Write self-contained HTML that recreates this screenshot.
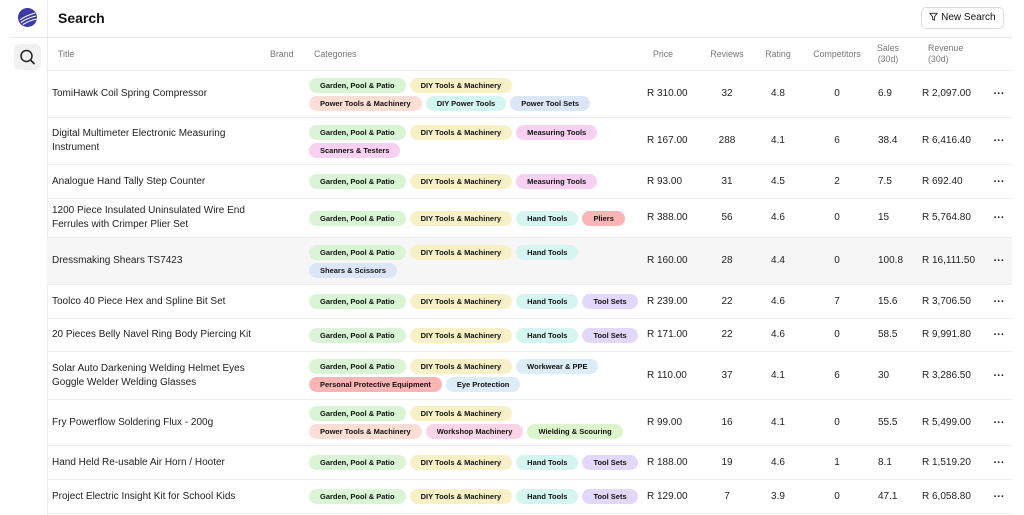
<!DOCTYPE html>
<html><head><meta charset="utf-8"><style>
*{box-sizing:border-box;margin:0;padding:0}
body{width:1024px;height:515px;overflow:hidden;background:#fff;font-family:"Liberation Sans",Arial,sans-serif;color:#1f1f1f;position:relative}
.vl{position:absolute;left:47px;top:0;width:1px;height:515px;background:#ececec}
.hl{position:absolute;left:10px;top:37px;width:1002px;height:1px;background:#e8e8e8}
.logo{position:absolute;left:18px;top:8px;width:19px;height:19px;border-radius:50%;background:#3b3aa8;overflow:hidden}
.sbtn{position:absolute;left:14px;top:44px;width:27px;height:26px;border-radius:6px;background:#f1f1f1}
h1{position:absolute;left:58px;top:10px;font-size:14px;font-weight:bold;color:#111}
.ns{position:absolute;left:921px;top:7px;width:83px;height:22px;border:1px solid #dcdcdc;border-radius:5px;font-size:10px;line-height:20px;text-align:center;color:#111}
.row{position:absolute;left:47px;width:965px;border-bottom:1px solid #ececec}
.row.gray{background:#f6f6f6}
.c{position:absolute;top:0;bottom:0;display:flex;align-items:center;font-size:10px;line-height:14px}
.hd .c{font-size:8.8px;color:#777;line-height:11px}
.t{left:5px;width:210px}
.br{left:223px}
.cat{left:262px;width:360px;flex-direction:column;align-items:flex-start;justify-content:center;gap:3px}
.cat div{display:flex;gap:4px}
.pr{left:600px}
.rv{left:662px;width:36px;justify-content:center}
.rt{left:713px;width:36px;justify-content:center}
.cp{left:763px;width:54px;justify-content:center}
.sl{left:831px}
.re{left:875px}
.dt{left:942px;width:20px;justify-content:center;font-weight:bold;font-size:11px}
.p{display:inline-block;height:15px;line-height:15px;padding:0 11px;border-radius:8px;font-size:7.5px;font-weight:bold;color:#111;white-space:nowrap}
.g{background:#d9f5d6}.y{background:#f8f1c8}.o{background:#fbded5}.cy{background:#d5f5f0}.b{background:#dbe6f8}.pi{background:#f7d0f2}.r{background:#fbb5b5}.v{background:#e2d8fb}.lb{background:#dcedf8}.wk{background:#fad5ea}.lg{background:#dcf5cc}
</style></head><body>
<div class="vl"></div><div class="hl"></div>
<div class="logo"><svg width="19" height="19" viewBox="0 0 19 19"><g fill="none" stroke="#fff" stroke-width="1.1"><path d="M2 12 Q7 8 17 5"/><path d="M3 14.5 Q9 10 18 8"/><path d="M5 16.5 Q11 12.5 19 11"/></g></svg></div>
<div class="sbtn"><svg width="27" height="26" viewBox="0 0 27 26"><circle cx="12.5" cy="12" r="5.5" fill="none" stroke="#222" stroke-width="1.5"/><path d="M16.5 16 L20 19.5" stroke="#222" stroke-width="1.6" stroke-linecap="round"/></svg></div>
<h1>Search</h1>
<div class="ns"><svg width="9" height="9" viewBox="0 0 10 10" style="vertical-align:-1px"><path d="M1 1.5 H9 L6 5.5 V9 L4 8 V5.5 Z" fill="none" stroke="#222" stroke-width="1"/></svg> New Search</div>

<div class="row hd" style="top:38px;height:33px">
<div class="c" style="left:11px">Title</div><div class="c br">Brand</div><div class="c" style="left:267px">Categories</div><div class="c" style="left:606px">Price</div><div class="c rv" style="left:660px;width:40px">Reviews</div><div class="c rt">Rating</div><div class="c cp" style="left:760px;width:60px">Competitors</div><div class="c" style="left:830px;width:34px;text-align:center">Sales<br>(30d)</div><div class="c" style="left:881px">Revenue<br>(30d)</div>
</div>

<div class="row" style="top:71px;height:47px"><div class="c t">TomiHawk Coil Spring Compressor</div><div class="c cat"><div><span class="p g">Garden, Pool &amp; Patio</span><span class="p y">DIY Tools &amp; Machinery</span></div><div><span class="p o">Power Tools &amp; Machinery</span><span class="p cy">DIY Power Tools</span><span class="p b">Power Tool Sets</span></div></div><div class="c pr">R 310.00</div><div class="c rv">32</div><div class="c rt">4.8</div><div class="c cp">0</div><div class="c sl">6.9</div><div class="c re">R 2,097.00</div><div class="c dt">···</div></div>

<div class="row" style="top:118px;height:47px"><div class="c t">Digital Multimeter Electronic Measuring Instrument</div><div class="c cat"><div><span class="p g">Garden, Pool &amp; Patio</span><span class="p y">DIY Tools &amp; Machinery</span><span class="p pi">Measuring Tools</span></div><div><span class="p pi">Scanners &amp; Testers</span></div></div><div class="c pr">R 167.00</div><div class="c rv">288</div><div class="c rt">4.1</div><div class="c cp">6</div><div class="c sl">38.4</div><div class="c re">R 6,416.40</div><div class="c dt">···</div></div>

<div class="row" style="top:165px;height:34px"><div class="c t">Analogue Hand Tally Step Counter</div><div class="c cat"><div><span class="p g">Garden, Pool &amp; Patio</span><span class="p y">DIY Tools &amp; Machinery</span><span class="p pi">Measuring Tools</span></div></div><div class="c pr">R 93.00</div><div class="c rv">31</div><div class="c rt">4.5</div><div class="c cp">2</div><div class="c sl">7.5</div><div class="c re">R 692.40</div><div class="c dt">···</div></div>

<div class="row" style="top:199px;height:39px"><div class="c t">1200 Piece Insulated Uninsulated Wire End Ferrules with Crimper Plier Set</div><div class="c cat"><div><span class="p g">Garden, Pool &amp; Patio</span><span class="p y">DIY Tools &amp; Machinery</span><span class="p cy">Hand Tools</span><span class="p r">Pliers</span></div></div><div class="c pr">R 388.00</div><div class="c rv">56</div><div class="c rt">4.6</div><div class="c cp">0</div><div class="c sl">15</div><div class="c re">R 5,764.80</div><div class="c dt">···</div></div>

<div class="row gray" style="top:238px;height:47px"><div class="c t">Dressmaking Shears TS7423</div><div class="c cat"><div><span class="p g">Garden, Pool &amp; Patio</span><span class="p y">DIY Tools &amp; Machinery</span><span class="p cy">Hand Tools</span></div><div><span class="p b">Shears &amp; Scissors</span></div></div><div class="c pr">R 160.00</div><div class="c rv">28</div><div class="c rt">4.4</div><div class="c cp">0</div><div class="c sl">100.8</div><div class="c re">R 16,111.50</div><div class="c dt">···</div></div>

<div class="row" style="top:285px;height:34px"><div class="c t">Toolco 40 Piece Hex and Spline Bit Set</div><div class="c cat"><div><span class="p g">Garden, Pool &amp; Patio</span><span class="p y">DIY Tools &amp; Machinery</span><span class="p cy">Hand Tools</span><span class="p v">Tool Sets</span></div></div><div class="c pr">R 239.00</div><div class="c rv">22</div><div class="c rt">4.6</div><div class="c cp">7</div><div class="c sl">15.6</div><div class="c re">R 3,706.50</div><div class="c dt">···</div></div>

<div class="row" style="top:319px;height:33px"><div class="c t">20 Pieces Belly Navel Ring Body Piercing Kit</div><div class="c cat"><div><span class="p g">Garden, Pool &amp; Patio</span><span class="p y">DIY Tools &amp; Machinery</span><span class="p cy">Hand Tools</span><span class="p v">Tool Sets</span></div></div><div class="c pr">R 171.00</div><div class="c rv">22</div><div class="c rt">4.6</div><div class="c cp">0</div><div class="c sl">58.5</div><div class="c re">R 9,991.80</div><div class="c dt">···</div></div>

<div class="row" style="top:352px;height:48px"><div class="c t">Solar Auto Darkening Welding Helmet Eyes Goggle Welder Welding Glasses</div><div class="c cat"><div><span class="p g">Garden, Pool &amp; Patio</span><span class="p y">DIY Tools &amp; Machinery</span><span class="p lb">Workwear &amp; PPE</span></div><div><span class="p r">Personal Protective Equipment</span><span class="p lb">Eye Protection</span></div></div><div class="c pr">R 110.00</div><div class="c rv">37</div><div class="c rt">4.1</div><div class="c cp">6</div><div class="c sl">30</div><div class="c re">R 3,286.50</div><div class="c dt">···</div></div>

<div class="row" style="top:400px;height:46px"><div class="c t">Fry Powerflow Soldering Flux - 200g</div><div class="c cat"><div><span class="p g">Garden, Pool &amp; Patio</span><span class="p y">DIY Tools &amp; Machinery</span></div><div><span class="p o">Power Tools &amp; Machinery</span><span class="p wk">Workshop Machinery</span><span class="p lg">Wielding &amp; Scouring</span></div></div><div class="c pr">R 99.00</div><div class="c rv">16</div><div class="c rt">4.1</div><div class="c cp">0</div><div class="c sl">55.5</div><div class="c re">R 5,499.00</div><div class="c dt">···</div></div>

<div class="row" style="top:446px;height:34px"><div class="c t">Hand Held Re-usable Air Horn / Hooter</div><div class="c cat"><div><span class="p g">Garden, Pool &amp; Patio</span><span class="p y">DIY Tools &amp; Machinery</span><span class="p cy">Hand Tools</span><span class="p v">Tool Sets</span></div></div><div class="c pr">R 188.00</div><div class="c rv">19</div><div class="c rt">4.6</div><div class="c cp">1</div><div class="c sl">8.1</div><div class="c re">R 1,519.20</div><div class="c dt">···</div></div>

<div class="row" style="top:480px;height:34px"><div class="c t">Project Electric Insight Kit for School Kids</div><div class="c cat"><div><span class="p g">Garden, Pool &amp; Patio</span><span class="p y">DIY Tools &amp; Machinery</span><span class="p cy">Hand Tools</span><span class="p v">Tool Sets</span></div></div><div class="c pr">R 129.00</div><div class="c rv">7</div><div class="c rt">3.9</div><div class="c cp">0</div><div class="c sl">47.1</div><div class="c re">R 6,058.80</div><div class="c dt">···</div></div>
</body></html>
